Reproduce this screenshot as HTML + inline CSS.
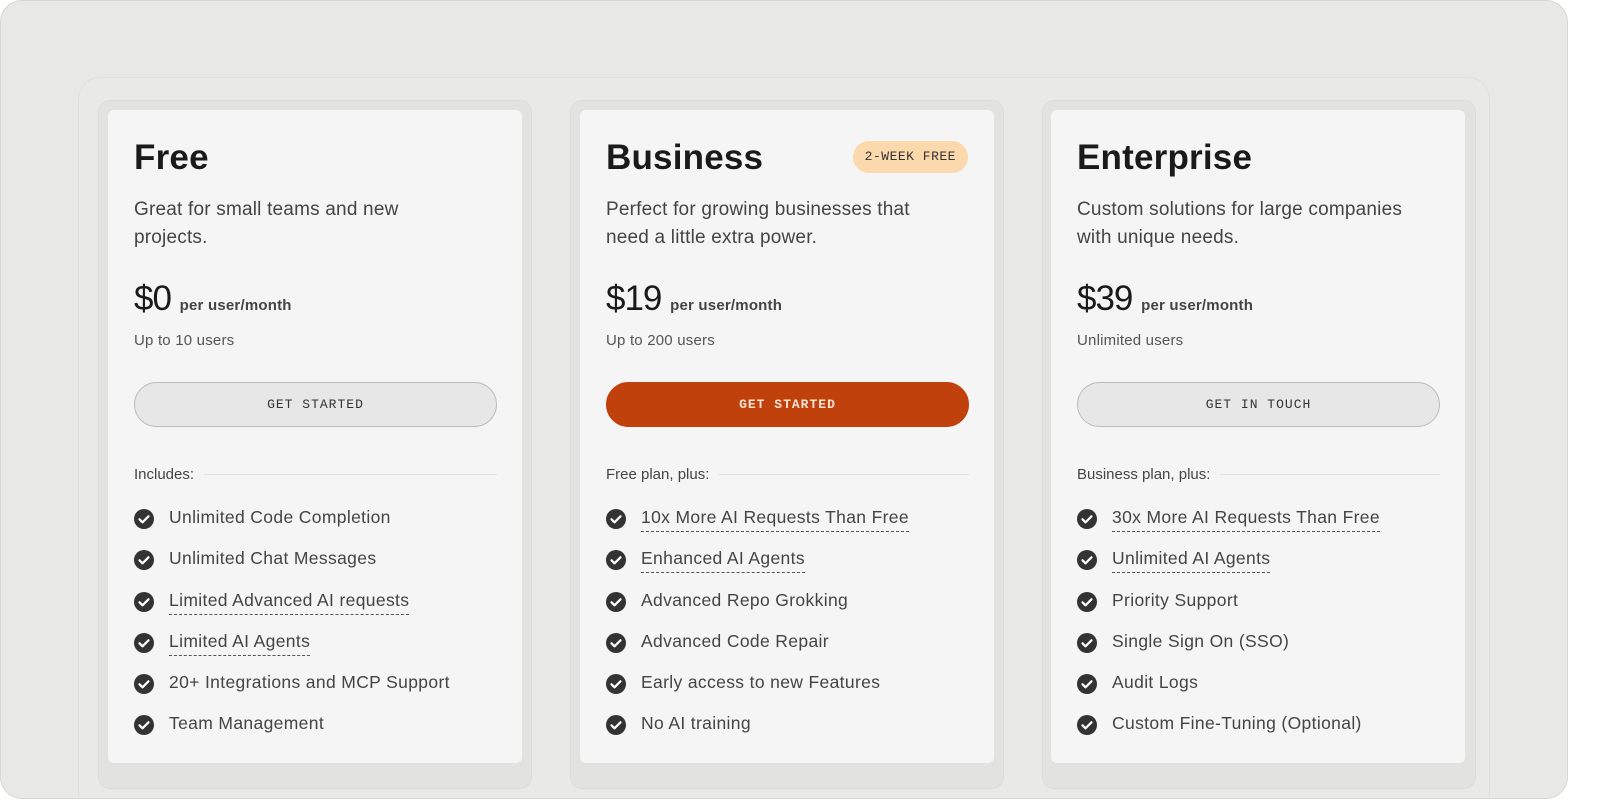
<!DOCTYPE html>
<html><head><meta charset="utf-8"><style>
*{box-sizing:border-box;margin:0;padding:0}
body{width:1600px;height:800px;background:#fff;font-family:"Liberation Sans",sans-serif;position:relative;overflow:hidden;color:#1a1a1a}
.frame{position:absolute;left:0;top:0;width:1568px;height:799px;background:#e8e8e6;border:1px solid #d6d6d4;border-radius:22px;overflow:hidden}
.cont{position:absolute;left:77px;top:76px;width:1412px;height:760px;border:1px solid #e0e0de;border-radius:22px;background:#e9e9e7}
.wrap{position:absolute;top:100px;width:434px;height:689px;background:#e2e2e1;border-radius:12px;border:1px solid #dcdcda}
.card{position:absolute;top:110px;width:414px;height:653px;background:#f5f5f5;border-radius:6px;padding:0 26px}
h2{position:absolute;top:138px;font-size:35px;font-weight:bold;letter-spacing:0.2px;color:#1a1a1a}
.desc{position:absolute;top:196px;left:26px;width:315px;font-size:19px;line-height:28px;color:#444;letter-spacing:0.2px}
.price{position:absolute;top:279px;left:26px;font-size:35px;color:#1a1a1a;letter-spacing:-1px}
.price span{font-size:15px;font-weight:bold;color:#444;letter-spacing:0.2px}
.users{position:absolute;top:332px;left:26px;font-size:15px;color:#555;letter-spacing:0.2px}
.btn{position:absolute;top:272px;left:26px;width:363px;height:45px;border-radius:23px;border:1px solid #bdbdbd;background:#e7e7e7;font-family:"Liberation Mono",monospace;font-size:13px;letter-spacing:1px;text-align:center;line-height:43px;color:#333}
.btn.o{background:#c1410c;border-color:#c1410c;color:#fbe3d3;font-weight:bold}
.inc{position:absolute;top:356px;left:26px;width:363px;font-size:15px;color:#444;display:flex;align-items:center}
.inc:after{content:"";flex:1;height:1px;background:#e2e2e2;margin-left:10px}
ul{position:absolute;top:397px;left:26px;list-style:none}
li{height:41.3px;font-size:17.5px;color:#444;display:flex;align-items:flex-start;letter-spacing:0.35px}
li svg{margin-right:15px;margin-top:2px;flex:none}
li u{text-decoration:none;border-bottom:1px dashed #555;padding-bottom:3px}
.badge{position:absolute;top:31px;right:26px;height:32px;padding:0 12px;border-radius:16px;background:#fcd9ac;font-family:"Liberation Mono",monospace;font-size:13px;line-height:32px;letter-spacing:.5px;color:#333}
</style></head><body>
<div class="frame"><div class="cont"></div></div>
<div class="wrap" style="left:98px"></div>
<div class="wrap" style="left:570px"></div>
<div class="wrap" style="left:1042px"></div>

<svg width="0" height="0" style="position:absolute"><defs><symbol id="c" viewBox="0 0 20 20"><circle cx="10" cy="10" r="10" fill="#333"/><path d="M5.5 10.3l3 3 6-6" stroke="#fff" stroke-width="2.2" fill="none" stroke-linecap="round" stroke-linejoin="round"/></symbol></defs></svg>

<div class="card" style="left:108px">
<h2 style="top:28px">Free</h2>
<div class="desc" style="top:86px">Great for small teams and new projects.</div>
<div class="price" style="top:169px">$0 <span>per user/month</span></div>
<div class="users" style="top:222px">Up to 10 users</div>
<div class="btn">GET STARTED</div>
<div class="inc">Includes:</div>
<ul>
<li><svg width="20" height="20"><use href="#c"/></svg>Unlimited Code Completion</li>
<li><svg width="20" height="20"><use href="#c"/></svg>Unlimited Chat Messages</li>
<li><svg width="20" height="20"><use href="#c"/></svg><u>Limited Advanced AI requests</u></li>
<li><svg width="20" height="20"><use href="#c"/></svg><u>Limited AI Agents</u></li>
<li><svg width="20" height="20"><use href="#c"/></svg>20+ Integrations and MCP Support</li>
<li><svg width="20" height="20"><use href="#c"/></svg>Team Management</li>
</ul>
</div>

<div class="card" style="left:580px">
<h2 style="top:28px">Business</h2>
<div class="badge">2-WEEK FREE</div>
<div class="desc" style="top:86px;width:340px">Perfect for growing businesses that need a little extra power.</div>
<div class="price" style="top:169px">$19 <span>per user/month</span></div>
<div class="users" style="top:222px">Up to 200 users</div>
<div class="btn o">GET STARTED</div>
<div class="inc">Free plan, plus:</div>
<ul>
<li><svg width="20" height="20"><use href="#c"/></svg><u>10x More AI Requests Than Free</u></li>
<li><svg width="20" height="20"><use href="#c"/></svg><u>Enhanced AI Agents</u></li>
<li><svg width="20" height="20"><use href="#c"/></svg>Advanced Repo Grokking</li>
<li><svg width="20" height="20"><use href="#c"/></svg>Advanced Code Repair</li>
<li><svg width="20" height="20"><use href="#c"/></svg>Early access to new Features</li>
<li><svg width="20" height="20"><use href="#c"/></svg>No AI training</li>
</ul>
</div>

<div class="card" style="left:1051px">
<h2 style="top:28px">Enterprise</h2>
<div class="desc" style="top:86px;width:350px">Custom solutions for large companies with unique needs.</div>
<div class="price" style="top:169px">$39 <span>per user/month</span></div>
<div class="users" style="top:222px">Unlimited users</div>
<div class="btn">GET IN TOUCH</div>
<div class="inc">Business plan, plus:</div>
<ul>
<li><svg width="20" height="20"><use href="#c"/></svg><u>30x More AI Requests Than Free</u></li>
<li><svg width="20" height="20"><use href="#c"/></svg><u>Unlimited AI Agents</u></li>
<li><svg width="20" height="20"><use href="#c"/></svg>Priority Support</li>
<li><svg width="20" height="20"><use href="#c"/></svg>Single Sign On (SSO)</li>
<li><svg width="20" height="20"><use href="#c"/></svg>Audit Logs</li>
<li><svg width="20" height="20"><use href="#c"/></svg>Custom Fine-Tuning (Optional)</li>
</ul>
</div>
</body></html>
